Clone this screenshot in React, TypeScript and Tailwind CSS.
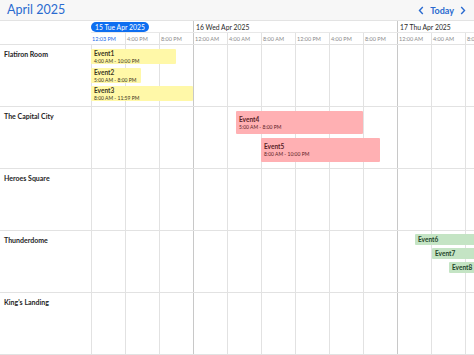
import React from "react";

const COL = 34;

type Ev = { title: string; time?: string; left: number; top: number; w: number; h: number; kind: "y" | "r" | "g" };

const rows: { name: string; events: Ev[] }[] = [
  {
    name: "Flatiron Room",
    events: [
      { title: "Event1", time: "4:00 AM - 10:00 PM", left: 0, top: 4, w: 85, h: 15, kind: "y" },
      { title: "Event2", time: "5:00 AM - 8:00 PM", left: 0, top: 23, w: 50, h: 15, kind: "y" },
      { title: "Event3", time: "8:00 AM - 11:59 PM", left: 0, top: 41, w: 102, h: 15, kind: "y" },
    ],
  },
  {
    name: "The Capital City",
    events: [
      { title: "Event4", time: "5:00 AM - 8:00 PM", left: 145, top: 4, w: 127, h: 23, kind: "r" },
      { title: "Event5", time: "8:00 AM - 10:00 PM", left: 170, top: 31, w: 119, h: 24, kind: "r" },
    ],
  },
  { name: "Heroes Square", events: [] },
  {
    name: "Thunderdome",
    events: [
      { title: "Event6", left: 324, top: 3, w: 70, h: 11, kind: "g" },
      { title: "Event7", left: 341, top: 17, w: 60, h: 11, kind: "g" },
      { title: "Event8", left: 358, top: 31, w: 40, h: 11, kind: "g" },
    ],
  },
  { name: "King's Landing", events: [] },
];

const days = [
  { label: "15 Tue Apr 2025", times: ["12:03 PM", "4:00 PM", "8:00 PM"], current: true },
  { label: "16 Wed Apr 2025", times: ["12:00 AM", "4:00 AM", "8:00 AM", "12:00 PM", "4:00 PM", "8:00 PM"] },
  { label: "17 Thu Apr 2025", times: ["12:00 AM", "4:00 AM", "8:00 AM", "12:00 PM", "4:00 PM", "8:00 PM"] },
];

function EventBox({ e }: { e: Ev }) {
  const bg = e.kind === "y" ? "bg-[#fff8a8]" : e.kind === "r" ? "bg-[#ffb0b3]" : "bg-[#c4e4c4]";
  const tc = e.kind === "y" ? "text-[#3a3520]" : e.kind === "r" ? "text-[#5a2226]" : "text-[#24442a]";
  return (
    <div
      className={`absolute ${bg} ${tc} rounded-[1px] flex flex-col justify-center pl-[3px] overflow-hidden`}
      style={{ left: e.left, top: e.top, width: e.w, height: e.h }}
    >
      <div className="text-[6.5px] font-bold leading-[8px] whitespace-nowrap">{e.title}</div>
      {e.time && <div className="text-[5px] leading-[6px] whitespace-nowrap">{e.time}</div>}
    </div>
  );
}

function GridLines() {
  const cols = [] as React.ReactNode[];
  for (let i = 0; i < 12; i++) {
    const dayEdge = i === 3 || i === 9;
    cols.push(
      <div
        key={i}
        className={`shrink-0 h-full border-l ${dayEdge ? "border-[#c8c8c8]" : "border-[#e2e2e2]"}`}
        style={{ width: COL }}
      />
    );
  }
  return <div className="absolute inset-0 flex pointer-events-none">{cols}</div>;
}

export default function App() {
  return (
    <div className="w-[474px] h-[355px] overflow-hidden bg-white font-['Lato',sans-serif] text-[#222]">
      {/* top bar */}
      <div className="h-[21px] bg-[#f7f7f7] border-b border-[#e3e3e3] flex items-center justify-between pl-[7px] pr-[8px]">
        <div className="text-[12.5px] leading-[14px] text-[#2a6bd0]">April 2025</div>
        <div className="flex items-center gap-[4px] text-[#2a6bd0]">
          <svg width="6" height="9" viewBox="0 0 6 9" fill="none"><path d="M4.8 1 1.5 4.5 4.8 8" stroke="currentColor" strokeWidth="1.4" /></svg>
          <span className="text-[9px] font-bold leading-[9px] px-[2px]">Today</span>
          <svg width="6" height="9" viewBox="0 0 6 9" fill="none"><path d="M1.2 1 4.5 4.5 1.2 8" stroke="currentColor" strokeWidth="1.4" /></svg>
        </div>
      </div>

      <div className="flex">
        {/* resource column */}
        <div className="w-[91px] shrink-0">
          <div className="h-[24px] border-b border-[#e2e2e2]" />
          {rows.map((r) => (
            <div key={r.name} className="h-[62px] border-b border-[#e2e2e2] pl-[4px] pt-[5px]">
              <div className="text-[7px] font-bold leading-[9px] text-[#1e1e1e] whitespace-nowrap">{r.name}</div>
            </div>
          ))}
        </div>

        {/* timeline */}
        <div className="flex-1 overflow-hidden">
          {/* date header */}
          <div className="flex h-[12px] border-b border-[#e8e8e8] whitespace-nowrap">
            {days.map((d, i) => (
              <div
                key={d.label}
                className={`shrink-0 h-full ${i > 0 ? "border-l border-[#c8c8c8]" : ""} flex items-center`}
                style={{ width: d.times.length * COL }}
              >
                {d.current ? (
                  <span className="h-[10px] px-[4px] rounded-full bg-[#0d6ef0] text-white text-[6.8px] leading-[10px]">{d.label}</span>
                ) : (
                  <span className="ml-[2px] text-[6.8px] leading-[10px] text-[#2a2a2a]">{d.label}</span>
                )}
              </div>
            ))}
          </div>
          {/* time header */}
          <div className="flex h-[12px] border-b border-[#e2e2e2] whitespace-nowrap">
            {days.map((d, i) =>
              d.times.map((t, j) => (
                <div
                  key={d.label + t}
                  className={`shrink-0 h-full flex items-center pl-[1px] ${j === 0 && i > 0 ? "border-l border-[#c8c8c8]" : j > 0 ? "border-l border-[#e2e2e2]" : ""}`}
                  style={{ width: COL }}
                >
                  <span className={`text-[5.5px] leading-[6px] ${d.current && j === 0 ? "text-[#1a6ae8]" : "text-[#8a8a8a]"}`}>{t}</span>
                </div>
              ))
            )}
          </div>
          {/* rows */}
          {rows.map((r) => (
            <div key={r.name} className="relative h-[62px] border-b border-[#e2e2e2]">
              <GridLines />
              {r.events.map((e) => (
                <EventBox key={e.title} e={e} />
              ))}
            </div>
          ))}
        </div>
      </div>
    </div>
  );
}
